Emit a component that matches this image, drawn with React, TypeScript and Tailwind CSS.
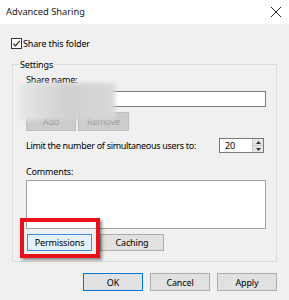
import React from 'react';

const font = { fontFamily: '"Noto Sans", "Liberation Sans", sans-serif' };

function WinButton({ label, className = '', primary = false, disabled = false }: { label: string; className?: string; primary?: boolean; disabled?: boolean }) {
    return (
        <div
            className={
                'flex items-center justify-center border text-[9px] leading-none tracking-[-0.15px] ' +
                (primary
                    ? 'border-[#0078d7] bg-[#e1e1e1] text-black '
                    : disabled
                        ? 'border-[#bfbfbf] bg-[#cccccc] text-[#9a9a9a] '
                        : 'border-[#adadad] bg-[#e1e1e1] text-black ') +
                className
            }
        >
            {label}
        </div>
    );
}

export default function App() {
    return (
        <div className="relative w-[289px] h-[300px] overflow-hidden bg-[#f0f0f0] text-black" style={font}>
            {/* Title bar */}
            <div className="flex h-[24px] items-center justify-between bg-white pl-[6px] pr-[6px]">
                <span className="text-[9.3px] leading-none text-[#1a1a1a]">Advanced Sharing</span>
                <svg width="12" height="12" viewBox="0 0 12 12" className="mr-[1px]">
                    <path d="M1 1 L11 11 M11 1 L1 11" stroke="#222" strokeWidth="1" fill="none" />
                </svg>
            </div>

            {/* Share this folder */}
            <div className="mt-[14px] flex items-center pl-[11px]">
                <div className="flex h-[11px] w-[11px] items-center justify-center border border-[#333] bg-white">
                    <svg width="9" height="9" viewBox="0 0 9 9">
                        <path d="M1.2 4.6 L3.4 6.9 L7.9 1.8" stroke="#222" strokeWidth="1.1" fill="none" />
                    </svg>
                </div>
                <span className="ml-[1px] text-[9px] leading-none tracking-[-0.15px]">Share this folder</span>
            </div>

            {/* Settings group */}
            <fieldset className="ml-[12px] mt-[9px] h-[204px] w-[265px] border border-[#dcdcdc] pl-[13px] text-[9px] tracking-[-0.15px]">
                <legend className="-ml-[7px] px-[1px] leading-[13px]">Settings</legend>
                <div className="mt-[3px] leading-[12px]">Share name:</div>
                <div className="mt-[5px] h-[16px] w-[240px] border border-[#7a7a7a] bg-white" />
                <div className="mt-[5px] flex gap-[2px]">
                    <WinButton label="Add" disabled className="h-[19px] w-[50px]" />
                    <WinButton label="Remove" disabled className="h-[19px] w-[51px]" />
                </div>
                <div className="mt-[7px] flex items-center justify-between pr-[12px]">
                    <span className="leading-none tracking-[-0.3px]">Limit the number of simultaneous users to:</span>
                    <div className="flex h-[15px] w-[45px] border border-[#7a7a7a] bg-white">
                        <span className="flex-1 pl-[5px] leading-[13px]">20</span>
                        <div className="flex w-[11px] flex-col border-l border-[#c8c8c8] bg-[#e6e6e6]">
                            <div className="flex flex-1 items-center justify-center border-b border-[#c8c8c8]">
                                <svg width="5" height="3" viewBox="0 0 5 3"><path d="M0 3 L2.5 0 L5 3 Z" fill="#333" /></svg>
                            </div>
                            <div className="flex flex-1 items-center justify-center">
                                <svg width="5" height="3" viewBox="0 0 5 3"><path d="M0 0 L2.5 3 L5 0 Z" fill="#333" /></svg>
                            </div>
                        </div>
                    </div>
                </div>
                <div className="mt-[13px] leading-[12px]">Comments:</div>
                <div className="mt-[2px] h-[49px] w-[240px] border border-[#a0a0a0] bg-white" />
                <div className="mt-[5px] flex gap-[8px] pl-[1px]">
                    <WinButton label="Permissions" className="h-[17px] w-[65px] !border-[#3c8ee0] !bg-[#e5f1fb]" />
                    <WinButton label="Caching" className="h-[17px] w-[64px]" />
                </div>
            </fieldset>

            {/* Dialog buttons */}
            <div className="mt-[11px] flex justify-end gap-[7px] pr-[12px]">
                <WinButton label="OK" primary className="h-[18px] w-[60px]" />
                <WinButton label="Cancel" className="h-[18px] w-[60px]" />
                <WinButton label="Apply" className="h-[18px] w-[60px]" />
            </div>

            {/* Blurred-out share name */}
            <div className="absolute left-[20px] top-[83px] h-[37px] w-[95px] bg-gradient-to-r from-[#e6e6e6] via-[#d0d0d0] to-[#d8d8d8] blur-[2px]" />

            {/* Red highlight */}
            <div className="absolute left-[20px] top-[218px] h-[40px] w-[80px] border-[4px] border-[#e8131a] shadow-[2px_2px_3px_rgba(0,0,0,0.45)]" />
        </div>
    );
}
